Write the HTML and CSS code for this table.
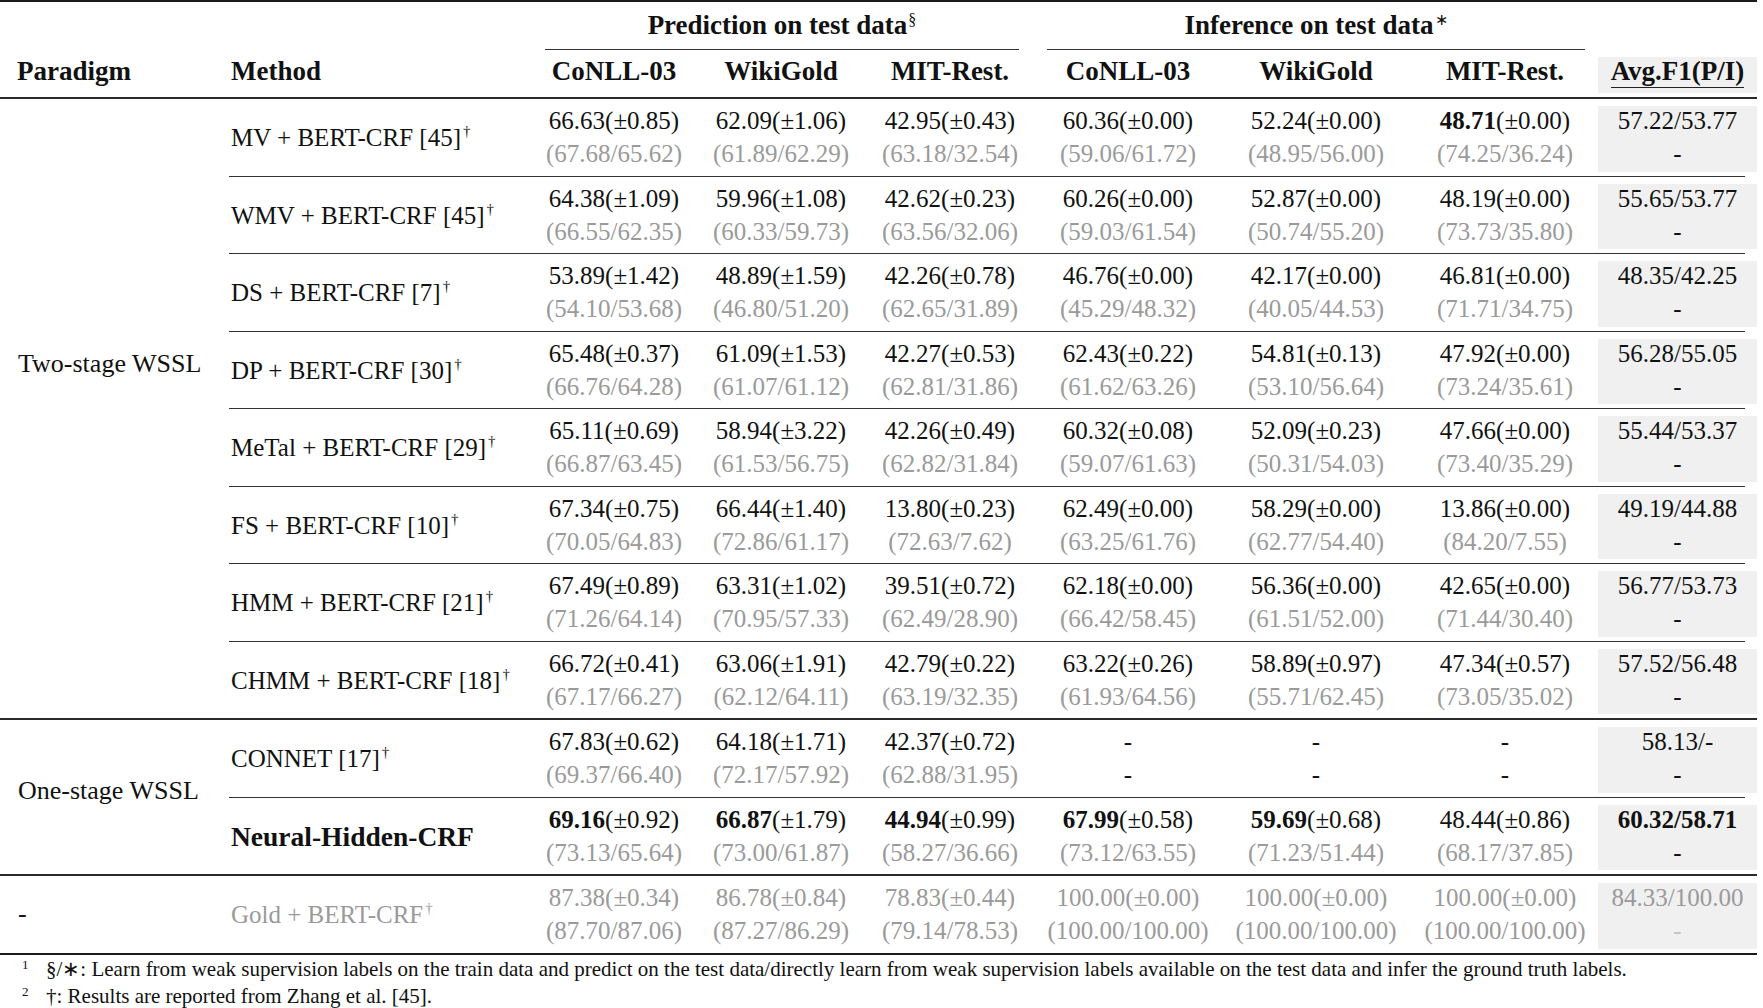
FILE: index.html
```html
<!DOCTYPE html>
<html lang="en">
<head>
<meta charset="utf-8">
<title>Results table</title>
<link rel="stylesheet" href="styles.css">
</head>
<body>
<div class="tbl">
  <div class="toprule"></div>
  <div class="cols hrow1">
    <div class="span g1"><span>Prediction on test data<sup class="mk">§</sup></span></div>
    <div class="span g2"><span>Inference on test data<sup class="mk">∗</sup></span></div>
  </div>
  <div class="cols hrow2">
    <div class="hc para-h">Paradigm</div>
    <div class="hc meth-h">Method</div>
    <div class="hc">CoNLL-03</div>
    <div class="hc">WikiGold</div>
    <div class="hc">MIT-Rest.</div>
    <div class="hc">CoNLL-03</div>
    <div class="hc">WikiGold</div>
    <div class="hc">MIT-Rest.</div>
    <div class="hc avg-h"><span class="ul">Avg.F1(P/I)</span></div>
  </div>
  <div class="midrule"></div>

  <div class="group">
    <div class="para two">Two-stage WSSL</div>
    <div class="rows">
      <div class="row">
        <div class="meth">MV + BERT-CRF [45]<sup class="dg">†</sup></div>
        <div class="val">66.63(±0.85)<span class="sub">(67.68/65.62)</span></div>
        <div class="val">62.09(±1.06)<span class="sub">(61.89/62.29)</span></div>
        <div class="val">42.95(±0.43)<span class="sub">(63.18/32.54)</span></div>
        <div class="val">60.36(±0.00)<span class="sub">(59.06/61.72)</span></div>
        <div class="val">52.24(±0.00)<span class="sub">(48.95/56.00)</span></div>
        <div class="val"><b>48.71</b>(±0.00)<span class="sub">(74.25/36.24)</span></div>
        <div class="val avg">57.22/53.77<span class="dash">-</span></div>
      </div>
      <div class="cline"></div>
      <div class="row">
        <div class="meth">WMV + BERT-CRF [45]<sup class="dg">†</sup></div>
        <div class="val">64.38(±1.09)<span class="sub">(66.55/62.35)</span></div>
        <div class="val">59.96(±1.08)<span class="sub">(60.33/59.73)</span></div>
        <div class="val">42.62(±0.23)<span class="sub">(63.56/32.06)</span></div>
        <div class="val">60.26(±0.00)<span class="sub">(59.03/61.54)</span></div>
        <div class="val">52.87(±0.00)<span class="sub">(50.74/55.20)</span></div>
        <div class="val">48.19(±0.00)<span class="sub">(73.73/35.80)</span></div>
        <div class="val avg">55.65/53.77<span class="dash">-</span></div>
      </div>
      <div class="cline"></div>
      <div class="row">
        <div class="meth">DS + BERT-CRF [7]<sup class="dg">†</sup></div>
        <div class="val">53.89(±1.42)<span class="sub">(54.10/53.68)</span></div>
        <div class="val">48.89(±1.59)<span class="sub">(46.80/51.20)</span></div>
        <div class="val">42.26(±0.78)<span class="sub">(62.65/31.89)</span></div>
        <div class="val">46.76(±0.00)<span class="sub">(45.29/48.32)</span></div>
        <div class="val">42.17(±0.00)<span class="sub">(40.05/44.53)</span></div>
        <div class="val">46.81(±0.00)<span class="sub">(71.71/34.75)</span></div>
        <div class="val avg">48.35/42.25<span class="dash">-</span></div>
      </div>
      <div class="cline"></div>
      <div class="row">
        <div class="meth">DP + BERT-CRF [30]<sup class="dg">†</sup></div>
        <div class="val">65.48(±0.37)<span class="sub">(66.76/64.28)</span></div>
        <div class="val">61.09(±1.53)<span class="sub">(61.07/61.12)</span></div>
        <div class="val">42.27(±0.53)<span class="sub">(62.81/31.86)</span></div>
        <div class="val">62.43(±0.22)<span class="sub">(61.62/63.26)</span></div>
        <div class="val">54.81(±0.13)<span class="sub">(53.10/56.64)</span></div>
        <div class="val">47.92(±0.00)<span class="sub">(73.24/35.61)</span></div>
        <div class="val avg">56.28/55.05<span class="dash">-</span></div>
      </div>
      <div class="cline"></div>
      <div class="row">
        <div class="meth">MeTal + BERT-CRF [29]<sup class="dg">†</sup></div>
        <div class="val">65.11(±0.69)<span class="sub">(66.87/63.45)</span></div>
        <div class="val">58.94(±3.22)<span class="sub">(61.53/56.75)</span></div>
        <div class="val">42.26(±0.49)<span class="sub">(62.82/31.84)</span></div>
        <div class="val">60.32(±0.08)<span class="sub">(59.07/61.63)</span></div>
        <div class="val">52.09(±0.23)<span class="sub">(50.31/54.03)</span></div>
        <div class="val">47.66(±0.00)<span class="sub">(73.40/35.29)</span></div>
        <div class="val avg">55.44/53.37<span class="dash">-</span></div>
      </div>
      <div class="cline"></div>
      <div class="row">
        <div class="meth">FS + BERT-CRF [10]<sup class="dg">†</sup></div>
        <div class="val">67.34(±0.75)<span class="sub">(70.05/64.83)</span></div>
        <div class="val">66.44(±1.40)<span class="sub">(72.86/61.17)</span></div>
        <div class="val">13.80(±0.23)<span class="sub">(72.63/7.62)</span></div>
        <div class="val">62.49(±0.00)<span class="sub">(63.25/61.76)</span></div>
        <div class="val">58.29(±0.00)<span class="sub">(62.77/54.40)</span></div>
        <div class="val">13.86(±0.00)<span class="sub">(84.20/7.55)</span></div>
        <div class="val avg">49.19/44.88<span class="dash">-</span></div>
      </div>
      <div class="cline"></div>
      <div class="row">
        <div class="meth">HMM + BERT-CRF [21]<sup class="dg">†</sup></div>
        <div class="val">67.49(±0.89)<span class="sub">(71.26/64.14)</span></div>
        <div class="val">63.31(±1.02)<span class="sub">(70.95/57.33)</span></div>
        <div class="val">39.51(±0.72)<span class="sub">(62.49/28.90)</span></div>
        <div class="val">62.18(±0.00)<span class="sub">(66.42/58.45)</span></div>
        <div class="val">56.36(±0.00)<span class="sub">(61.51/52.00)</span></div>
        <div class="val">42.65(±0.00)<span class="sub">(71.44/30.40)</span></div>
        <div class="val avg">56.77/53.73<span class="dash">-</span></div>
      </div>
      <div class="cline"></div>
      <div class="row">
        <div class="meth">CHMM + BERT-CRF [18]<sup class="dg">†</sup></div>
        <div class="val">66.72(±0.41)<span class="sub">(67.17/66.27)</span></div>
        <div class="val">63.06(±1.91)<span class="sub">(62.12/64.11)</span></div>
        <div class="val">42.79(±0.22)<span class="sub">(63.19/32.35)</span></div>
        <div class="val">63.22(±0.26)<span class="sub">(61.93/64.56)</span></div>
        <div class="val">58.89(±0.97)<span class="sub">(55.71/62.45)</span></div>
        <div class="val">47.34(±0.57)<span class="sub">(73.05/35.02)</span></div>
        <div class="val avg">57.52/56.48<span class="dash">-</span></div>
      </div>
    </div>
  </div>
  <div class="midrule"></div>

  <div class="group">
    <div class="para one">One-stage WSSL</div>
    <div class="rows">
      <div class="row">
        <div class="meth">CONNET [17]<sup class="dg">†</sup></div>
        <div class="val">67.83(±0.62)<span class="sub">(69.37/66.40)</span></div>
        <div class="val">64.18(±1.71)<span class="sub">(72.17/57.92)</span></div>
        <div class="val">42.37(±0.72)<span class="sub">(62.88/31.95)</span></div>
        <div class="val">-<span class="dash">-</span></div>
        <div class="val">-<span class="dash">-</span></div>
        <div class="val">-<span class="dash">-</span></div>
        <div class="val avg">58.13/-<span class="dash">-</span></div>
      </div>
      <div class="cline"></div>
      <div class="row">
        <div class="meth ours">Neural-Hidden-CRF</div>
        <div class="val"><b>69.16</b>(±0.92)<span class="sub">(73.13/65.64)</span></div>
        <div class="val"><b>66.87</b>(±1.79)<span class="sub">(73.00/61.87)</span></div>
        <div class="val"><b>44.94</b>(±0.99)<span class="sub">(58.27/36.66)</span></div>
        <div class="val"><b>67.99</b>(±0.58)<span class="sub">(73.12/63.55)</span></div>
        <div class="val"><b>59.69</b>(±0.68)<span class="sub">(71.23/51.44)</span></div>
        <div class="val">48.44(±0.86)<span class="sub">(68.17/37.85)</span></div>
        <div class="val avg"><b>60.32/58.71</b><span class="dash">-</span></div>
      </div>
    </div>
  </div>
  <div class="midrule"></div>

  <div class="group gold">
    <div class="para gold-p">-</div>
    <div class="rows">
      <div class="row">
        <div class="meth">Gold + BERT-CRF<sup class="dg">†</sup></div>
        <div class="val">87.38(±0.34)<span class="sub">(87.70/87.06)</span></div>
        <div class="val">86.78(±0.84)<span class="sub">(87.27/86.29)</span></div>
        <div class="val">78.83(±0.44)<span class="sub">(79.14/78.53)</span></div>
        <div class="val">100.00(±0.00)<span class="sub">(100.00/100.00)</span></div>
        <div class="val">100.00(±0.00)<span class="sub">(100.00/100.00)</span></div>
        <div class="val">100.00(±0.00)<span class="sub">(100.00/100.00)</span></div>
        <div class="val avg">84.33/100.00<span class="dash light">-</span></div>
      </div>
    </div>
  </div>
  <div class="bottomrule"></div>

  <div class="notes">
    <div class="note"><span class="fnum">1</span><span>§/∗: Learn from weak supervision labels on the train data and predict on the test data/directly learn from weak supervision labels available on the test data and infer the ground truth labels.</span></div>
    <div class="note"><span class="fnum">2</span><span>†: Results are reported from Zhang et al. [45].</span></div>
  </div>
</div>
</body>
</html>
```

FILE: styles.css
```css
html, body {
  margin: 0;
  padding: 0;
  background: #ffffff;
}

body {
  font-family: "Liberation Serif", "Times New Roman", serif;
  color: #111;
  font-size: 25px;
}

.tbl {
  width: 1757px;
}

.toprule {
  height: 2px;
  background: #1a1a1a;
}

.midrule {
  height: 2px;
  background: #2a2a2a;
}

.bottomrule {
  height: 2.5px;
  background: #1a1a1a;
}

.cols {
  display: grid;
  grid-template-columns: 229px 301px 168px 166px 172px 184px 192px 186px 159px;
}

.hrow1 {
  height: 48px;
}

.span {
  display: flex;
  align-items: center;
  justify-content: center;
  border-bottom: 1px solid #333;
  font-weight: bold;
  font-size: 27px;
}

.g1 {
  grid-column: 3 / 6;
  margin: 0 17px 0 15px;
}

.g2 {
  grid-column: 6 / 9;
  margin: 0 13px 0 11px;
}

.mk {
  font-size: 16px;
  font-weight: normal;
  vertical-align: 9px;
  line-height: 0;
  margin-left: 1px;
}

.hrow2 {
  height: 47px;
  align-items: center;
}

.hc {
  font-weight: bold;
  font-size: 27px;
  text-align: center;
  padding-bottom: 5px;
}

.para-h {
  text-align: left;
  padding-left: 17px;
}

.meth-h {
  text-align: left;
  padding-left: 2px;
}

.avg-h {
  align-self: stretch;
  display: flex;
  align-items: center;
  justify-content: center;
  padding-bottom: 4px;
  background: linear-gradient(#f0f0f0, #f0f0f0) 0 7px / 100% calc(100% - 11px) no-repeat;
}

.ul {
  border-bottom: 1.5px solid #222;
  line-height: 30px;
  padding-bottom: 1px;
}

.group {
  display: flex;
}

.para {
  flex: none;
  width: 229px;
  box-sizing: border-box;
  padding-left: 18px;
  display: flex;
  align-items: center;
  font-size: 26px;
}

.para.two {
  padding-bottom: 90px;
}

.para.one {
  padding-bottom: 12px;
}

.rows {
  flex: 1;
}

.row {
  display: grid;
  grid-template-columns: 301px 168px 166px 172px 184px 192px 186px 159px;
  height: 76.5px;
  align-items: center;
}

.cline {
  height: 1px;
  background: #333;
  margin-right: 12px;
}

.meth {
  padding-left: 2px;
  padding-top: 2px;
}

.meth.ours {
  font-weight: bold;
  font-size: 27.5px;
}

.dg {
  font-size: 15px;
  vertical-align: 10px;
  line-height: 0;
  margin-left: 2px;
}

.val {
  text-align: center;
  line-height: 33px;
  white-space: nowrap;
}

.sub {
  display: block;
  color: #9a9a9a;
}

.dash {
  display: block;
}

.avg {
  align-self: stretch;
  display: flex;
  flex-direction: column;
  justify-content: center;
  background: linear-gradient(#f0f0f0, #f0f0f0) 0 7px / 100% calc(100% - 11px) no-repeat;
}

.gold {
  color: #9a9a9a;
}

.gold .para {
  color: #111;
}

.dash.light {
  color: #c4c4c4;
}

.notes {
  padding-top: 1px;
  font-size: 21px;
  line-height: 27px;
}

.note {
  display: flex;
}

.fnum {
  flex: none;
  width: 46px;
  box-sizing: border-box;
  padding-left: 22px;
  font-size: 13px;
  line-height: 18px;
}
```
